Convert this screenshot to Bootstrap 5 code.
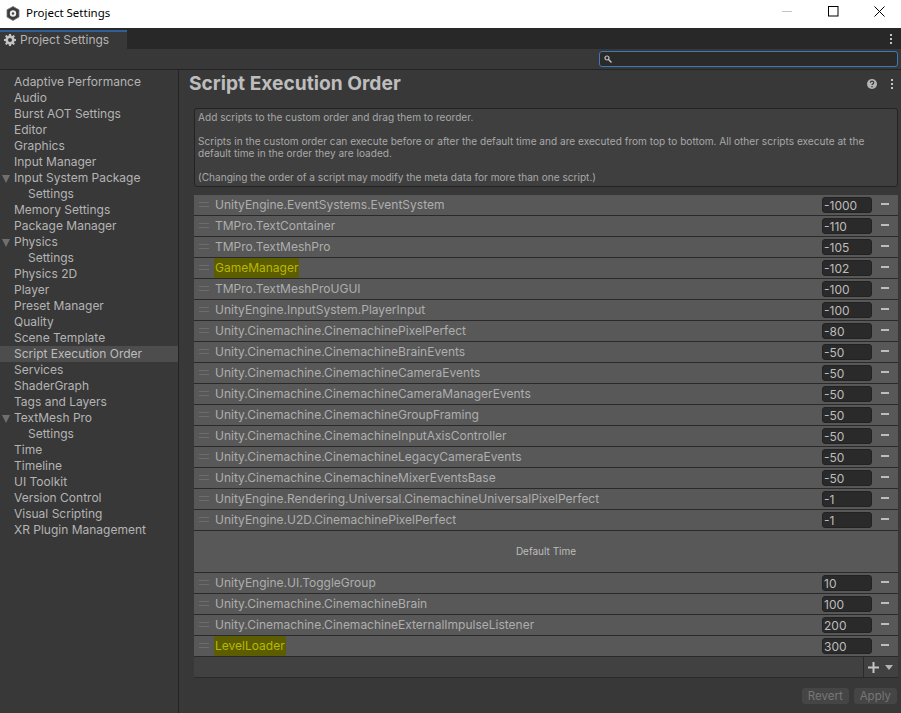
<!DOCTYPE html>
<html lang="en"><head><meta charset="utf-8"><title>Project Settings</title>
<link href="https://cdn.jsdelivr.net/npm/bootstrap@5.3.0/dist/css/bootstrap.min.css" rel="stylesheet">
<style>
html,body{height:713px;overflow:hidden;background:#383838;margin:0}
body{font-family:Inter,"Liberation Sans",sans-serif;color:#b4b4b4;font-size:12px;line-height:16px}
.titlebar{height:28px;background:#fff;color:#000;font-size:11.5px;font-family:"Noto Sans",sans-serif;padding-left:6px;padding-bottom:2px}
.tt-text{margin-left:6px}
.winbtns{margin-left:auto;margin-right:-1px;padding-bottom:3px}
.winbtn{width:46px;height:24px}
.tabstrip{height:21px;background:#282828}
.tabx{width:127px;height:19px;margin-top:2px;background:#383838;border-top:2px solid #2f5f96;padding-left:4px;padding-bottom:1px;gap:4px;color:#b4b4b4;line-height:16px}
.searchbar{height:21px;background:#383838;border-bottom:1px solid #232323;padding:2px 3px 2px 0}
.searchx{width:299px;height:16px;background:#2a2a2a;border:1px solid #3a79bb;border-radius:3px;padding-left:4px}
.mainx{height:643px}
.side{width:179px;border-right:1px solid #232323;padding-top:4px;flex:none}
.sitem{height:16px;padding-left:14px;white-space:nowrap;position:relative}
.sitem.sub{padding-left:28px}
.sitem.sel{background:#4d4d4d;color:#bdbdbd}
.tri{position:absolute;left:2px;top:5px;width:0;height:0;border-left:4px solid transparent;border-right:4px solid transparent;border-top:8px solid #6f6f6f}
.content{padding:0 3px 0 15px;min-width:0}
.ttl{height:30px;margin-bottom:8px;margin-left:-5px;padding-bottom:4px}
.ttl h1{font-size:19.2px;font-weight:700;margin:0;color:#bdbdbd;line-height:26px;font-family:Inter,sans-serif}
.hicons{margin-left:auto;gap:13px;padding-right:4px;padding-top:2px}
.helpbox{height:79px;background:#3f3f3f;border:1px solid #232323;border-radius:3px;margin-bottom:8px;padding:2px 3px;font-size:10.1px;line-height:12px;color:#a8a8a8;width:704px}
.helpbox p{margin:0;height:12px;white-space:nowrap}
.helpbox p.gap12{margin-top:12px}
.olist{width:704px}
.orow{height:21px;background:#585858;border-bottom:1px solid #2a2a2a;padding-left:5px;position:relative;color:#aeaeae}
.grip{width:10px;height:5px;border-top:1px solid #6c6c6c;border-bottom:1px solid #6c6c6c;margin-right:6px;flex:none;margin-top:-2px}
.sname{line-height:16px}
.hl{background:#5c5c00;color:#b8b800;padding:2px 1px;margin-left:-1px;border-radius:2px}
.numx{width:50px;height:16px;background:#2a2a2a;border:1px solid #222;border-radius:3px;margin-left:auto;font-size:12px;line-height:15px;padding-left:1px;color:#bdbdbd}
.minus{width:8px;height:2px;background:#bdbdbd;margin:0 9px 2px 9px;flex:none}
.defrow{height:42px;background:#585858;border-bottom:1px solid #2a2a2a;font-size:10px;color:#bdbdbd;padding-bottom:2px}
.footx{height:21px;background:#414141;border-bottom:1px solid #2a2a2a}
.addbox{margin-left:auto;width:35px;height:20px;border-left:1px solid #2a2a2a;gap:6px;padding-left:4px}
.bottomx{gap:5px;padding-top:10px;padding-right:1px}
.btnx{height:16px;background:#454545;border-radius:3px;color:#777;padding:0 6px;line-height:16px;font-size:11.5px}
</style></head>
<body>
<div class="titlebar d-flex align-items-center">
<svg width="14" height="15" viewBox="0 0 14 15"><path d="M7 .5l6 3.300v7.200l-6 3.500-6-3.500V3.800z" fill="#3c3c3c" stroke="#777" stroke-width=".8"/><circle cx="7" cy="7.500" r="3.200" fill="#eee"/><circle cx="7" cy="7.500" r="1.200" fill="#444"/></svg>
<span class="tt-text">Project Settings</span>
<div class="winbtns d-flex">
<div class="winbtn d-flex align-items-center justify-content-center"><svg width="11" height="11"><path d="M0 5.500h10" stroke="#c4c4c4"/></svg></div>
<div class="winbtn d-flex align-items-center justify-content-center"><svg width="11" height="11"><rect x=".5" y=".5" width="9.500" height="9.500" fill="none" stroke="#000"/></svg></div>
<div class="winbtn d-flex align-items-center justify-content-center"><svg width="11" height="11"><path d="M.5.500l10 10M10.500.500l-10 10" stroke="#000"/></svg></div>
</div></div>
<div class="tabstrip d-flex">
<div class="tabx d-flex align-items-center">
<svg width="12" height="12" viewBox="0 0 12 12"><path fill="#c4c4c4" fill-rule="evenodd" d="M5 0h2l.3 1.700 1 .4L9.800 1.100l1.100 1.100-1 1.500.4 1L12 5v2l-1.700.3-.4 1 1 1.500-1.100 1.100-1.500-1-1 .4L7 12H5l-.3-1.700-1-.4-1.500 1-1.100-1.100 1-1.500-.4-1L0 7V5l1.700-.3.4-1-1-1.500 1.100-1.100 1.500 1 1-.4zM6 4a2 2 0 100 4 2 2 0 000-4z"/></svg>
<span>Project Settings</span></div>
<div class="ms-auto d-flex align-items-center pe-2"><svg width="4" height="12"><g fill="#c4c4c4"><rect x="1" y="1" width="2" height="2"/><rect x="1" y="5" width="2" height="2"/><rect x="1" y="9" width="2" height="2"/></g></svg></div>
</div>
<div class="searchbar d-flex justify-content-end">
<div class="searchx d-flex align-items-center"><svg width="8" height="8" viewBox="0 0 8 8"><circle cx="3" cy="3" r="2" fill="none" stroke="#c4c4c4" stroke-width="1.200"/><path d="M4.500 4.500L7.500 7.500" stroke="#c4c4c4" stroke-width="1.400"/></svg></div>
</div>
<div class="mainx d-flex">
<div class="side">
<div class="sitem">Adaptive Performance</div><div class="sitem">Audio</div><div class="sitem">Burst AOT Settings</div><div class="sitem">Editor</div><div class="sitem">Graphics</div><div class="sitem">Input Manager</div>
<div class="sitem"><i class="tri"></i>Input System Package</div><div class="sitem sub">Settings</div>
<div class="sitem">Memory Settings</div><div class="sitem">Package Manager</div>
<div class="sitem"><i class="tri"></i>Physics</div><div class="sitem sub">Settings</div>
<div class="sitem">Physics 2D</div><div class="sitem">Player</div><div class="sitem">Preset Manager</div><div class="sitem">Quality</div><div class="sitem">Scene Template</div>
<div class="sitem sel">Script Execution Order</div><div class="sitem">Services</div><div class="sitem">ShaderGraph</div><div class="sitem">Tags and Layers</div>
<div class="sitem"><i class="tri"></i>TextMesh Pro</div><div class="sub sitem">Settings</div>
<div class="sitem">Time</div><div class="sitem">Timeline</div><div class="sitem">UI Toolkit</div><div class="sitem">Version Control</div><div class="sitem">Visual Scripting</div><div class="sitem">XR Plugin Management</div>
</div>
<div class="content flex-grow-1">
<div class="ttl d-flex align-items-center">
<h1>Script Execution Order</h1>
<div class="hicons d-flex align-items-center">
<svg width="10" height="10" viewBox="0 0 10 10"><circle cx="5" cy="5" r="5" fill="#b4b4b4"/><path d="M3.400 3.800c0-2.100 3.300-2.100 3.300-.1 0 1.200-1.700 1.200-1.700 2.400" fill="none" stroke="#383838" stroke-width="1.200"/><rect x="4.400" y="7" width="1.300" height="1.300" fill="#383838"/></svg>
<svg width="4" height="12"><g fill="#c4c4c4"><rect x="1" y="1" width="2" height="2"/><rect x="1" y="5" width="2" height="2"/><rect x="1" y="9" width="2" height="2"/></g></svg>
</div></div>
<div class="helpbox">
<p>Add scripts to the custom order and drag them to reorder.</p>
<p class="gap12">Scripts in the custom order can execute before or after the default time and are executed from top to bottom. All other scripts execute at the</p>
<p>default time in the order they are loaded.</p>
<p class="gap12">(Changing the order of a script may modify the meta data for more than one script.)</p>
</div>
<div class="olist">
<div class="orow d-flex align-items-center"><i class="grip"></i><span class="sname">UnityEngine.EventSystems.EventSystem</span><span class="numx">-1000</span><i class="minus"></i></div>
<div class="orow d-flex align-items-center"><i class="grip"></i><span class="sname">TMPro.TextContainer</span><span class="numx">-110</span><i class="minus"></i></div>
<div class="orow d-flex align-items-center"><i class="grip"></i><span class="sname">TMPro.TextMeshPro</span><span class="numx">-105</span><i class="minus"></i></div>
<div class="orow d-flex align-items-center"><i class="grip"></i><span class="sname hl">GameManager</span><span class="numx">-102</span><i class="minus"></i></div>
<div class="orow d-flex align-items-center"><i class="grip"></i><span class="sname">TMPro.TextMeshProUGUI</span><span class="numx">-100</span><i class="minus"></i></div>
<div class="orow d-flex align-items-center"><i class="grip"></i><span class="sname">UnityEngine.InputSystem.PlayerInput</span><span class="numx">-100</span><i class="minus"></i></div>
<div class="orow d-flex align-items-center"><i class="grip"></i><span class="sname">Unity.Cinemachine.CinemachinePixelPerfect</span><span class="numx">-80</span><i class="minus"></i></div>
<div class="orow d-flex align-items-center"><i class="grip"></i><span class="sname">Unity.Cinemachine.CinemachineBrainEvents</span><span class="numx">-50</span><i class="minus"></i></div>
<div class="orow d-flex align-items-center"><i class="grip"></i><span class="sname">Unity.Cinemachine.CinemachineCameraEvents</span><span class="numx">-50</span><i class="minus"></i></div>
<div class="orow d-flex align-items-center"><i class="grip"></i><span class="sname">Unity.Cinemachine.CinemachineCameraManagerEvents</span><span class="numx">-50</span><i class="minus"></i></div>
<div class="orow d-flex align-items-center"><i class="grip"></i><span class="sname">Unity.Cinemachine.CinemachineGroupFraming</span><span class="numx">-50</span><i class="minus"></i></div>
<div class="orow d-flex align-items-center"><i class="grip"></i><span class="sname">Unity.Cinemachine.CinemachineInputAxisController</span><span class="numx">-50</span><i class="minus"></i></div>
<div class="orow d-flex align-items-center"><i class="grip"></i><span class="sname">Unity.Cinemachine.CinemachineLegacyCameraEvents</span><span class="numx">-50</span><i class="minus"></i></div>
<div class="orow d-flex align-items-center"><i class="grip"></i><span class="sname">Unity.Cinemachine.CinemachineMixerEventsBase</span><span class="numx">-50</span><i class="minus"></i></div>
<div class="orow d-flex align-items-center"><i class="grip"></i><span class="sname">UnityEngine.Rendering.Universal.CinemachineUniversalPixelPerfect</span><span class="numx">-1</span><i class="minus"></i></div>
<div class="orow d-flex align-items-center"><i class="grip"></i><span class="sname">UnityEngine.U2D.CinemachinePixelPerfect</span><span class="numx">-1</span><i class="minus"></i></div>
<div class="defrow d-flex align-items-center justify-content-center">Default Time</div>
<div class="orow d-flex align-items-center"><i class="grip"></i><span class="sname">UnityEngine.UI.ToggleGroup</span><span class="numx">10</span><i class="minus"></i></div>
<div class="orow d-flex align-items-center"><i class="grip"></i><span class="sname">Unity.Cinemachine.CinemachineBrain</span><span class="numx">100</span><i class="minus"></i></div>
<div class="orow d-flex align-items-center"><i class="grip"></i><span class="sname">Unity.Cinemachine.CinemachineExternalImpulseListener</span><span class="numx">200</span><i class="minus"></i></div>
<div class="orow d-flex align-items-center"><i class="grip"></i><span class="sname hl">LevelLoader</span><span class="numx">300</span><i class="minus"></i></div>
<div class="footx d-flex"><div class="addbox d-flex align-items-center">
<svg width="11" height="11"><path d="M5.500 0v11M0 5.500h11" stroke="#c4c4c4" stroke-width="2"/></svg>
<svg width="8" height="5"><path d="M0 0h8L4 5z" fill="#b4b4b4"/></svg>
</div></div>
</div>
<div class="bottomx d-flex justify-content-end">
<span class="btnx">Revert</span><span class="btnx">Apply</span>
</div>
</div>
</div>
<script src="https://cdn.jsdelivr.net/npm/bootstrap@5.3.0/dist/js/bootstrap.bundle.min.js"></script>
</body></html>
